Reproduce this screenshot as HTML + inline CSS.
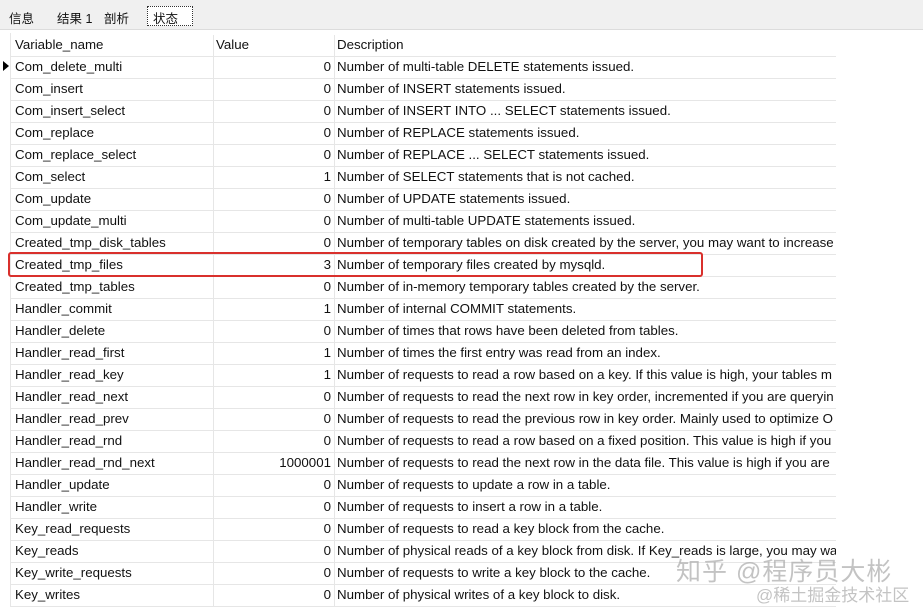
<!DOCTYPE html>
<html><head><meta charset="utf-8"><style>
body{margin:0;width:923px;height:607px;overflow:hidden;background:#fff;font-family:"Liberation Sans","Noto Sans CJK SC",sans-serif;font-size:13.3px;color:#111;position:relative}
.tabs{position:absolute;left:0;top:0;width:923px;height:29px;background:#f0f0f0;border-bottom:1px solid #dcdcdc}
.tab{position:absolute;top:8px;font-size:12.5px}
.sel{position:absolute;left:147px;top:6px;width:46px;height:20px;background:#fff;border:1px dotted #333;box-sizing:border-box;padding:1px 5px;font-size:12.5px}
.grid{position:absolute;left:10px;top:35px;width:826px}
.r{position:relative;height:22px;border-bottom:1px solid #e6e6e6;box-sizing:border-box;white-space:nowrap;overflow:hidden}
.r span{position:absolute;top:2px}
.c1{left:5px}.c2{right:505px}.c3{left:327px}
.r:before{content:"";position:absolute;left:203px;top:0;bottom:0;border-left:1px solid #e6e6e6}
.r:after{content:"";position:absolute;left:324px;top:0;bottom:0;border-left:1px solid #e6e6e6}
.h .c2{left:206px;right:auto}
.box{position:absolute;left:8px;top:252px;width:691px;height:21px;border:2px solid #d9302c;border-radius:3px}
.arrow{position:absolute;left:3px;top:61px;width:0;height:0;border-top:5px solid transparent;border-bottom:5px solid transparent;border-left:6px solid #000}
.lb{position:absolute;left:10px;top:33px;bottom:0;border-left:1px solid #e6e6e6}
.wm{position:absolute;color:rgba(170,170,170,.7);white-space:nowrap}
</style></head><body>
<div class="tabs">
<span class="tab" style="left:9px">信息</span>
<span class="tab" style="left:57px">结果 1</span>
<span class="tab" style="left:104px">剖析</span>
<div class="sel">状态</div>
</div>
<div class="lb"></div>
<div class="arrow"></div>
<div class="grid">
<div class="r h"><span class="c1">Variable_name</span><span class="c2">Value</span><span class="c3">Description</span></div>
<div class="r"><span class="c1">Com_delete_multi</span><span class="c2">0</span><span class="c3">Number of multi-table DELETE statements issued.</span></div>
<div class="r"><span class="c1">Com_insert</span><span class="c2">0</span><span class="c3">Number of INSERT statements issued.</span></div>
<div class="r"><span class="c1">Com_insert_select</span><span class="c2">0</span><span class="c3">Number of INSERT INTO ... SELECT statements issued.</span></div>
<div class="r"><span class="c1">Com_replace</span><span class="c2">0</span><span class="c3">Number of REPLACE statements issued.</span></div>
<div class="r"><span class="c1">Com_replace_select</span><span class="c2">0</span><span class="c3">Number of REPLACE ... SELECT statements issued.</span></div>
<div class="r"><span class="c1">Com_select</span><span class="c2">1</span><span class="c3">Number of SELECT statements that is not cached.</span></div>
<div class="r"><span class="c1">Com_update</span><span class="c2">0</span><span class="c3">Number of UPDATE statements issued.</span></div>
<div class="r"><span class="c1">Com_update_multi</span><span class="c2">0</span><span class="c3">Number of multi-table UPDATE statements issued.</span></div>
<div class="r"><span class="c1">Created_tmp_disk_tables</span><span class="c2">0</span><span class="c3">Number of temporary tables on disk created by the server, you may want to increase</span></div>
<div class="r"><span class="c1">Created_tmp_files</span><span class="c2">3</span><span class="c3">Number of temporary files created by mysqld.</span></div>
<div class="r"><span class="c1">Created_tmp_tables</span><span class="c2">0</span><span class="c3">Number of in-memory temporary tables created by the server.</span></div>
<div class="r"><span class="c1">Handler_commit</span><span class="c2">1</span><span class="c3">Number of internal COMMIT statements.</span></div>
<div class="r"><span class="c1">Handler_delete</span><span class="c2">0</span><span class="c3">Number of times that rows have been deleted from tables.</span></div>
<div class="r"><span class="c1">Handler_read_first</span><span class="c2">1</span><span class="c3">Number of times the first entry was read from an index.</span></div>
<div class="r"><span class="c1">Handler_read_key</span><span class="c2">1</span><span class="c3">Number of requests to read a row based on a key. If this value is high, your tables m</span></div>
<div class="r"><span class="c1">Handler_read_next</span><span class="c2">0</span><span class="c3">Number of requests to read the next row in key order, incremented if you are queryin</span></div>
<div class="r"><span class="c1">Handler_read_prev</span><span class="c2">0</span><span class="c3">Number of requests to read the previous row in key order. Mainly used to optimize O</span></div>
<div class="r"><span class="c1">Handler_read_rnd</span><span class="c2">0</span><span class="c3">Number of requests to read a row based on a fixed position. This value is high if you</span></div>
<div class="r"><span class="c1">Handler_read_rnd_next</span><span class="c2">1000001</span><span class="c3">Number of requests to read the next row in the data file. This value is high if you are</span></div>
<div class="r"><span class="c1">Handler_update</span><span class="c2">0</span><span class="c3">Number of requests to update a row in a table.</span></div>
<div class="r"><span class="c1">Handler_write</span><span class="c2">0</span><span class="c3">Number of requests to insert a row in a table.</span></div>
<div class="r"><span class="c1">Key_read_requests</span><span class="c2">0</span><span class="c3">Number of requests to read a key block from the cache.</span></div>
<div class="r"><span class="c1">Key_reads</span><span class="c2">0</span><span class="c3">Number of physical reads of a key block from disk. If Key_reads is large, you may wa</span></div>
<div class="r"><span class="c1">Key_write_requests</span><span class="c2">0</span><span class="c3">Number of requests to write a key block to the cache.</span></div>
<div class="r"><span class="c1">Key_writes</span><span class="c2">0</span><span class="c3">Number of physical writes of a key block to disk.</span></div>
</div>
<div class="box"></div>
<div class="wm" style="left:676px;top:552px;font-size:25px;letter-spacing:1px">知乎 @程序员大彬</div>
<div class="wm" style="left:756px;top:581px;font-size:17px">@稀土掘金技术社区</div>
</body></html>
